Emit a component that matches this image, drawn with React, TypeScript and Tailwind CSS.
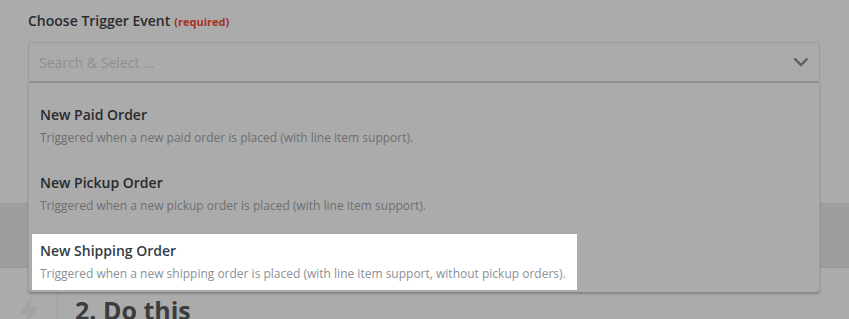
import React from 'react';

const items = [
  {
    title: 'New Paid Order',
    desc: 'Triggered when a new paid order is placed (with line item support).',
  },
  {
    title: 'New Pickup Order',
    desc: 'Triggered when a new pickup order is placed (with line item support).',
  },
  {
    title: 'New Shipping Order',
    desc: 'Triggered when a new shipping order is placed (with line item support, without pickup orders).',
    active: true,
  },
];

export default function App() {
  return (
    <div
      className="relative w-[849px] h-[319px] overflow-hidden bg-[#ababab]"
      style={{ fontFamily: '"Open Sans", "Liberation Sans", sans-serif' }}
    >
      {/* step 1 card (dimmed) */}
      <div className="h-[203px] px-[28px] pt-[10px]">
        <div className="flex items-baseline gap-[4px]">
          <span className="text-[14px] font-semibold text-[#282b2e]">Choose Trigger Event</span>
          <span className="text-[11px] font-bold text-[#a8321c]">(required)</span>
        </div>
        <div className="mt-[11px] h-[41px] w-[792px] rounded-[3px] border border-[#9c9c9c] border-b-2 border-b-[#8f9294] flex items-center justify-between pl-[10px] pr-[10px]">
          <span className="text-[14px] text-[#8f8f8f]">Search &amp; Select ...</span>
          <svg width="16" height="10" viewBox="0 0 16 10" fill="none">
            <polyline points="1.5,1.5 8,8 14.5,1.5" stroke="#5c6064" strokeWidth="2.4" />
          </svg>
        </div>
      </div>

      {/* grey page band */}
      <div className="h-[65px] bg-[#9d9e9e] border-b border-[#959595]" />

      {/* step 2 card */}
      <div className="flex h-[51px]">
        <div className="w-[58px] border-r border-[#9e9e9e] mt-[14px] flex justify-center pt-[14px]">
          <svg width="22" height="30" viewBox="0 0 22 30">
            <path d="M14 0 L2 18 H10 L7 30 L20 11 H12 Z" fill="#a2a2a2" />
          </svg>
        </div>
        <div className="pl-[17px] pt-[27px] text-[25px] font-bold leading-[30px] text-[#3a3c3e] whitespace-nowrap">2. Do this</div>
      </div>

      {/* dropdown menu */}
      <div className="absolute left-[28px] top-[84px] w-[792px] h-[208px] rounded-b-[3px] border-l border-r border-[#a0a0a0] bg-[#ababab] shadow-[0_2px_2px_rgba(0,0,0,0.22)] pl-[3px] pt-[14px] flex flex-col gap-[12px]">
        {items.map((it) => (
          <div
            key={it.title}
            className={`w-fit pl-[8px] pr-[11px] pt-[7px] pb-[8px] ${it.active ? 'bg-white' : ''}`}
          >
            <div className={`text-[14px] font-semibold leading-[20px] ${it.active ? 'text-[#333c45]' : 'text-[#272a2d]'}`}>
              {it.title}
            </div>
            <div className={`mt-[5px] text-[12px] leading-[16px] whitespace-nowrap ${it.active ? 'text-[#8a9097]' : 'text-[#6c6f72]'}`}>
              {it.desc}
            </div>
          </div>
        ))}
      </div>
    </div>
  );
}
